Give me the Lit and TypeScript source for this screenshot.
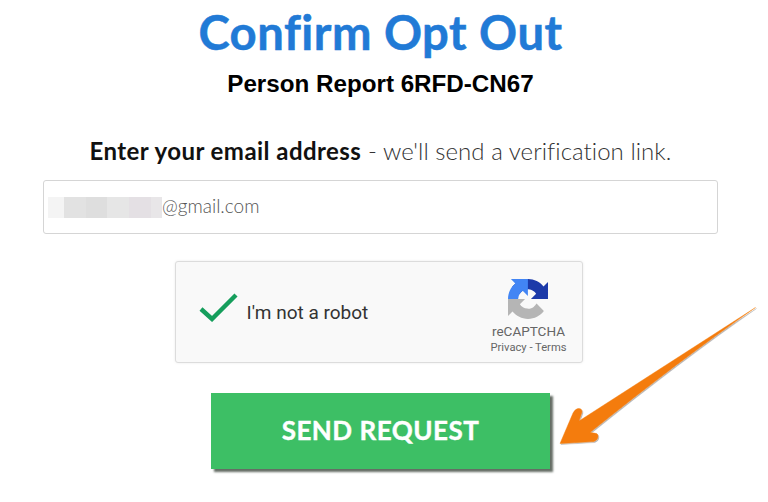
import { LitElement, html, css } from "lit";
import { customElement } from "lit/decorators.js";

@customElement("app-root")
export class AppRoot extends LitElement {
  static styles = css`
    :host {
      display: block;
      position: relative;
      width: 768px;
      height: 502px;
      overflow: hidden;
      background: #fff;
      font-family: "Lato", "Liberation Sans", sans-serif;
    }
    .page {
      display: flex;
      flex-direction: column;
      align-items: center;
      padding: 0 50px 0 43px;
    }
    h1 {
      margin: 5px 0 0;
      font-size: 47.2px;
      line-height: 54px;
      font-weight: 700;
      color: #217ad6;
      letter-spacing: 0.5px;
      white-space: nowrap;
      -webkit-text-stroke: 0.5px #217ad6;
    }
    h2 {
      margin: 10px 0 0;
      font-family: "Liberation Sans", Arial, sans-serif;
      font-size: 24.2px;
      line-height: 30px;
      font-weight: 700;
      color: #000;
      white-space: nowrap;
    }
    .lead {
      margin: 36px 0 0;
      font-size: 24px;
      line-height: 32px;
      font-weight: 300;
      letter-spacing: 0.04px;
      color: #333;
      white-space: nowrap;
    }
    .lead b {
      color: #111;
      font-size: 24px;
      font-weight: 700;
      letter-spacing: 0.45px;
    }
    .field {
      box-sizing: border-box;
      width: 675px;
      height: 54px;
      margin-top: 13px;
      display: flex;
      align-items: center;
      padding: 0 0 3px 4px;
      border: 1px solid #d5d5d5;
      border-radius: 3px;
      font-size: 19px;
      font-weight: 300;
      color: #555;
    }
    .blur {
      display: flex;
      height: 21px;
      width: 114px;
      margin-top: 3px;
    }
    .blur i {
      display: block;
      height: 100%;
    }
    .captcha {
      box-sizing: border-box;
      width: 408px;
      height: 102px;
      margin: 27px 4px 0 0;
      display: flex;
      align-items: center;
      padding: 0 15px 0 23px;
      background: #f9f9f9;
      border: 1px solid #dcdcdc;
      border-radius: 3px;
      box-shadow: 0 0 3px rgba(0, 0, 0, 0.08);
      font-family: Roboto, "Liberation Sans", sans-serif;
    }
    .check {
      width: 40px;
      height: 30px;
      flex: none;
      margin-top: -10px;
    }
    .label {
      margin-left: 8px;
      font-size: 19px;
      color: #333;
      flex: 1;
    }
    .brand {
      display: flex;
      flex-direction: column;
      align-items: center;
      color: #666;
      margin-top: 10px;
    }
    .brand svg {
      width: 40px;
      height: 40px;
      display: block;
    }
    .name {
      margin-top: 4px;
      font-size: 13.5px;
      line-height: 16px;
    }
    .links {
      margin-top: 2px;
      font-size: 11.2px;
      line-height: 14px;
      white-space: nowrap;
    }
    .send {
      box-sizing: border-box;
      width: 339px;
      height: 76px;
      margin-top: 30px;
      padding: 0 0 2px;
      border: none;
      background: #3dbf65;
      color: #fff;
      font-family: inherit;
      font-size: 26px;
      font-weight: 700;
      letter-spacing: 0.5px;
      -webkit-text-stroke: 0.4px #fff;
      box-shadow: 3px 3px 2px rgba(50, 60, 50, 0.75);
    }
    .arrow {
      position: absolute;
      left: 0;
      top: 0;
      width: 768px;
      height: 502px;
      pointer-events: none;
    }
  `;

  render() {
    const blur = [
      ["16px", "#f4f4f4"],
      ["22px", "#e2e2e2"],
      ["21px", "#dedede"],
      ["22px", "#e6e6e6"],
      ["22px", "#e4e0e4"],
      ["11px", "#e8e6e8"],
    ];
    return html`
      <main class="page">
        <h1>Confirm Opt Out</h1>
        <h2>Person Report 6RFD-CN67</h2>
        <p class="lead"><b>Enter your email address</b> - we'll send a verification link.</p>
        <div class="field">
          <span class="blur">
            ${blur.map(([w, c]) => html`<i style="width:${w};background:${c}"></i>`)}
          </span>
          <span>@gmail.com</span>
        </div>
        <div class="captcha">
          <svg class="check" viewBox="0 0 40 30">
            <path d="M2 17 L13 27 L37 3" fill="none" stroke="#159e5c" stroke-width="4.4" />
          </svg>
          <span class="label">I'm not a robot</span>
          <div class="brand">
            <svg viewBox="0 0 64 64">
              <path fill="#1c3aa9" d="M64 31.955l-.033-1.37V4.687l-7.16 7.16C50.948 4.674 42.033.093 32.05.093c-10.4 0-19.622 4.96-25.458 12.64l11.736 11.86a15.55 15.55 0 0 1 4.754-5.334c2.05-1.6 4.952-2.906 8.968-2.906.485 0 .86.057 1.135.163 4.976.393 9.288 3.14 11.828 7.124l-8.307 8.307 26.2.004" />
              <path fill="#4285f4" d="M31.862.001l-1.37.033H4.594l7.16 7.16C4.58 13.053 0 21.968 0 31.95h16.26c0-.485.057-.86.163-1.135.393-4.976 3.14-9.288 7.124-11.828l8.307 8.307.004-26.2" />
              <path fill="#b5b5b5" d="M.001 31.95l.033 1.37v25.898l7.16-7.16c5.86 7.173 14.775 11.754 24.757 11.754 10.4 0 19.622-4.96 25.458-12.64l-11.736-11.86a15.55 15.55 0 0 1-4.754 5.334c-2.05 1.6-4.952 2.906-8.968 2.906-.485 0-.86-.057-1.135-.163-4.976-.393-9.288-3.14-11.828-7.124l8.307-8.307-26.2-.004" />
            </svg>
            <span class="name">reCAPTCHA</span>
            <span class="links">Privacy - Terms</span>
          </div>
        </div>
        <button class="send">SEND REQUEST</button>
      </main>
      <svg class="arrow" viewBox="0 0 768 502">
        <defs>
          <filter id="as" x="-10%" y="-10%" width="120%" height="120%">
            <feDropShadow dx="1" dy="1" stdDeviation="0.7" flood-color="#000" flood-opacity="0.3" />
          </filter>
        </defs>
        <path
          d="M755.5 307.5 Q680 356 579 421 L582 412 Q582 408 578 408.5 Q575 409 573 413 L560 443.5 L594 441.5 Q598 440 598 436 Q598 433 594 433 L590 432.5 Q680 360 755.5 307.5 Z"
          fill="#f47b0a"
          stroke="#f47b0a"
          stroke-width="0.4"
          stroke-linejoin="round"
          filter="url(#as)"
        />
      </svg>
    `;
  }
}
